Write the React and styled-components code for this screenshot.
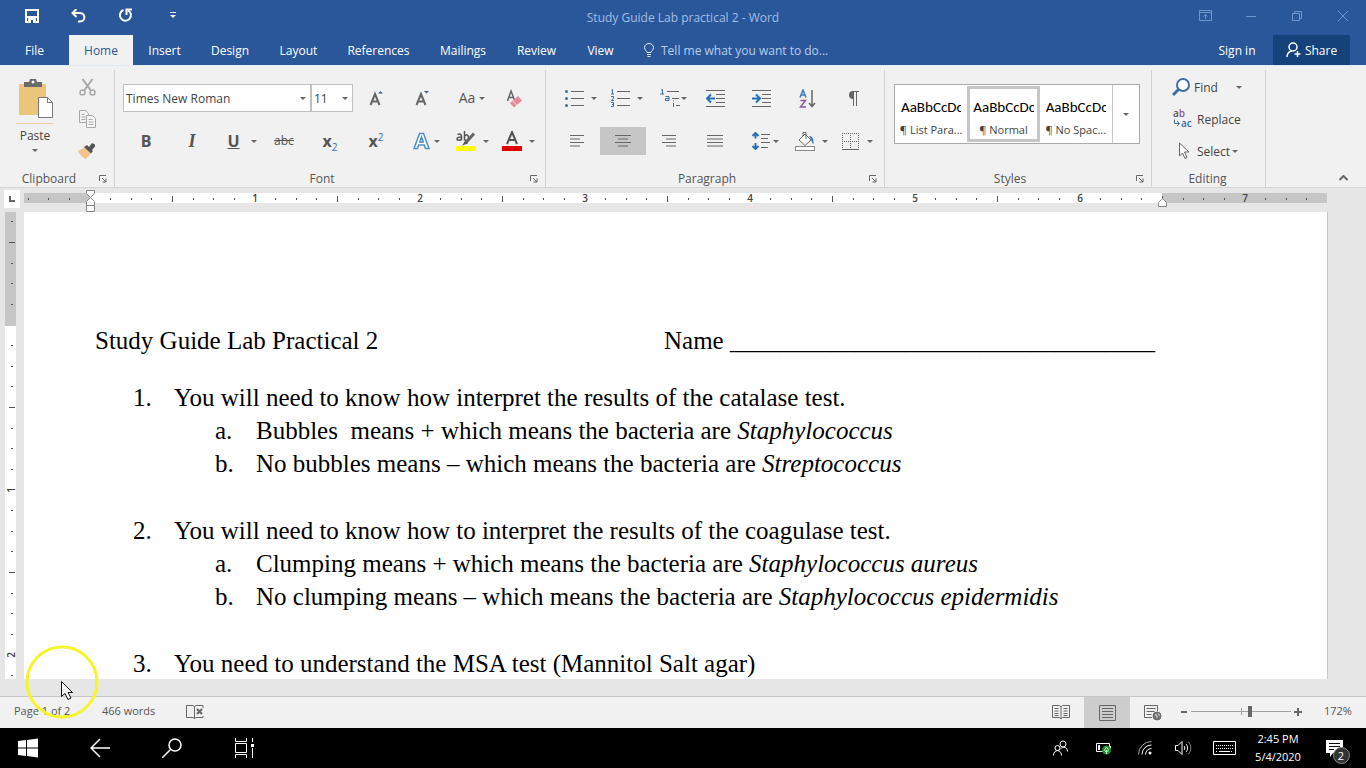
import React from 'react';
import styled, { createGlobalStyle } from 'styled-components';

const GlobalStyle = createGlobalStyle`
  * {
    box-sizing: border-box;
  }

  body {
    margin: 0;
    background: #e6e6e6;
    font-family: "Segoe UI", "Open Sans", "Noto Sans", sans-serif;
    font-size: 12px;
    color: #444;
  }

  button,
  input,
  select {
    font: inherit;
    color: inherit;
  }

  svg {
    display: block;
    flex: none;
  }
`;

const Window = styled.div`
  display: flex;
  flex-direction: column;
  height: 100vh;
  overflow: hidden;
`;

/* ---------- shared ---------- */

const PlainButton = styled.button`
  display: flex;
  align-items: center;
  justify-content: center;
  padding: 0;
  border: none;
  background: transparent;
  white-space: nowrap;
  cursor: pointer;
`;

const CaretShape = styled.span`
  flex: none;
  border: 3px solid transparent;
  border-top-color: #666;
  border-bottom: none;
`;

/* ---------- title bar and tabs ---------- */

const Header = styled.header`
  flex: none;
  background: #2a579a;
  color: #fff;
`;

const TitleBar = styled.div`
  display: grid;
  grid-template-columns: 1fr auto 1fr;
  align-items: center;
  height: 35px;
`;

const QuickAccess = styled.div`
  display: flex;
  align-items: flex-start;
  height: 34px;
  padding-left: 8px;
`;

const QuickButton = styled(PlainButton)`
  width: 47px;
  height: 30px;
`;

const WindowTitle = styled.div`
  color: #a3bde3;
`;

const WindowControls = styled.div`
  display: flex;
  align-items: flex-start;
  justify-content: flex-end;
  height: 34px;
`;

const ControlButton = styled(PlainButton)`
  width: 46px;
  height: 30px;
  color: #7095cc;
`;

const TabRow = styled.nav`
  display: flex;
  height: 30px;
`;

const Tab = styled(PlainButton)`
  width: ${(props) => props.$width}px;
  height: 30px;
  background: ${(props) => (props.$active ? '#f1f1f1' : 'transparent')};
  color: ${(props) => (props.$active ? '#2a579a' : '#fff')};
`;

const TellMe = styled.label`
  display: flex;
  flex: 1;
  align-items: center;
  gap: 6px;
  padding-left: 13px;
`;

const TellMeInput = styled.input`
  width: 200px;
  padding: 0;
  border: none;
  outline: none;
  background: transparent;

  &::placeholder {
    color: #b8cdec;
    opacity: 1;
  }
`;

const ShareButton = styled(PlainButton)`
  gap: 4px;
  width: 77px;
  height: 30px;
  margin-right: 16px;
  background: #15427a;
`;

const SignIn = styled(PlainButton)`
  width: 72px;
`;

/* ---------- ribbon ---------- */

const Ribbon = styled.section`
  display: flex;
  flex: none;
  height: 123px;
  padding-top: 4px;
  border-top: 1px solid #e2ebf6;
  border-bottom: 1px solid #d5d5d5;
  background: #f1f1f1;
`;

const Group = styled.div`
  display: flex;
  flex: none;
  flex-direction: column;
  width: ${(props) => props.$width}px;
  padding: 14px 8px 0;
  border-right: 1px solid #d2d2d2;
`;

const GroupBody = styled.div`
  display: flex;
  flex: 1;
  flex-direction: ${(props) => (props.$column ? 'column' : 'row')};
  gap: ${(props) => props.$gap || 0}px;
`;

const GroupFooter = styled.div`
  display: grid;
  grid-template-columns: ${(props) => (props.$launcher ? '1fr 14px' : '1fr')};
  align-items: center;
  height: 16px;
  margin: 0 -4px 0 -6px;
  line-height: 16px;
  text-align: center;
  color: #555;
`;

const ToolRow = styled.div`
  display: flex;
  height: 28px;
`;

const Tool = styled(PlainButton)`
  gap: ${(props) => props.$gap || 4}px;
  width: 46px;
  height: 28px;
  padding-left: ${(props) => (props.$split ? 8 : 0)}px;
  background: ${(props) => (props.$pressed ? '#c6c6c6' : 'transparent')};
`;

const Glyph = styled.span`
  font-size: ${(props) => props.$size || 16}px;
  font-weight: ${(props) => (props.$bold ? 700 : 400)};
  font-style: ${(props) => (props.$italic ? 'italic' : 'normal')};
  font-family: ${(props) => (props.$serif ? '"Liberation Serif", serif' : 'inherit')};
  text-decoration: ${(props) => props.$line || 'none'};
  line-height: 20px;
  color: #555;

  sub,
  sup {
    font-size: 10px;
    font-weight: 400;
    line-height: 0;
    color: #2a70b8;
  }
`;

const ComboWrap = styled.label`
  display: flex;
  align-items: center;
  width: ${(props) => props.$width}px;
  height: 28px;
  padding-right: 4px;
  border: 1px solid #c0c0c0;
  background: #fff;
`;

const Combo = styled.select`
  flex: 1;
  min-width: 0;
  padding: 0 0 0 2px;
  border: none;
  outline: none;
  appearance: none;
  background: transparent;
`;

const PasteButton = styled(PlainButton)`
  flex-direction: column;
  justify-content: flex-start;
  gap: 5px;
  width: 52px;
  height: 80px;
  margin: -5px 0 0;
  line-height: 16px;
`;

const PasteSplit = styled.span`
  display: flex;
  flex-direction: column;
  align-items: center;
  gap: 5px;
  width: 38px;
  padding-top: 4px;
  border-top: 1px solid #ecd0a8;
`;

const ClipboardTools = styled.div`
  display: flex;
  flex-direction: column;
  gap: 4px;
  width: 42px;
  margin-top: -11px;
`;

const ClipboardBody = styled(GroupBody)`
  padding-left: 1px;
`;

const Gallery = styled.div`
  display: flex;
  height: 60px;
  margin: 0 3px 0 1px;
  border: 1px solid #ababab;
  background: #fff;
`;

const StyleCard = styled.button`
  flex: 1;
  min-width: 0;
  margin: 1px 0;
  padding: 6px 3px 0;
  border: 3px solid ${(props) => (props.$active ? '#c6c6c6' : 'transparent')};
  background: #fff;
  cursor: pointer;
`;

const StyleSample = styled.span`
  display: block;
  overflow: hidden;
  margin-bottom: 7px;
  font-family: Calibri, Lato, sans-serif;
  font-size: 15px;
  line-height: 18px;
  text-align: left;
  white-space: nowrap;
  color: #000;
`;

const StyleName = styled.span`
  display: block;
  margin: 0 -4px;
  font-size: 11px;
  line-height: 14px;
  white-space: nowrap;
`;

const GalleryMore = styled(PlainButton)`
  width: 27px;
  border-left: 1px solid #c6c6c6;
`;

const EditList = styled.div`
  display: flex;
  flex-direction: column;
  gap: 8px;
  margin-top: -9px;
  padding-left: 12px;
`;

const EditButton = styled(PlainButton)`
  justify-content: flex-start;
  gap: ${(props) => props.$gap || 4}px;
  height: 24px;
`;

const EditIcon = styled.span`
  display: flex;
  justify-content: center;
  width: ${(props) => props.$width}px;
`;

const CollapseButton = styled(PlainButton)`
  align-self: flex-end;
  width: 24px;
  height: 18px;
  margin: 0 11px 0 auto;
`;

/* ---------- document ---------- */

const Workspace = styled.main`
  display: grid;
  flex: 1;
  grid-template-columns: 24px 1fr 38px;
  grid-template-rows: 24px 1fr;
  min-height: 0;
  padding-bottom: 17px;
  background: #e6e6e6;
`;

const TabStop = styled(PlainButton)`
  width: 16px;
  height: 18px;
  margin: 2px 0 0 4px;
  background: #fff;
`;

const RulerTrack = styled.div`
  grid-column: 2;
  min-width: 0;
  overflow: hidden;
`;

const SideRuler = styled.div`
  grid-column: 1;
  overflow: hidden;
  width: 11px;
  min-height: 0;
  margin-left: 5px;
  background: #fff;
`;

const Page = styled.article`
  min-height: 0;
  overflow: hidden;
  padding: 112px 166px 0 71px;
  border-right: 1px solid #c6c6c6;
  background: #fff;
  font-family: "Times New Roman", "Liberation Serif", serif;
  font-size: 25px;
  line-height: 33px;
  color: #000;
`;

const Heading = styled.div`
  display: grid;
  grid-template-columns: 569px 1fr;
  margin-bottom: 24px;
  white-space: nowrap;
`;

const Outline = styled.ol`
  display: grid;
  gap: 34px;
  margin: 0;
  padding: 0 0 0 38px;
  list-style: none;
  counter-reset: question;
`;

const Question = styled.li`
  padding-left: 41px;
  white-space: nowrap;
  counter-increment: question;

  &::before {
    content: counter(question) '.';
    float: left;
    margin-left: -41px;
  }
`;

const Answers = styled.ol`
  margin: 0;
  padding: 0 0 0 82px;
  list-style: none;
  counter-reset: answer;

  li {
    counter-increment: answer;
  }

  li::before {
    content: counter(answer, lower-alpha) '.';
    float: left;
    margin-left: -41px;
  }
`;

/* ---------- status bar ---------- */

const StatusBar = styled.footer`
  display: flex;
  flex: none;
  align-items: center;
  height: 32px;
  padding: 0 14px;
  border-top: 1px solid #c6c6c6;
  background: #f1f1f1;
  font-size: 11px;
  line-height: 16px;
  color: #555;
`;

const StatusText = styled.span`
  width: ${(props) => props.$width}px;
  padding-bottom: 3px;
  white-space: nowrap;
`;

const StatusIcon = styled.span`
  padding-bottom: 2px;
`;

const ViewButtons = styled.div`
  display: flex;
  align-self: stretch;
  margin-left: auto;
`;

const ViewButton = styled(PlainButton)`
  width: 46px;
  background: ${(props) => (props.$active ? '#cdcdcd' : 'transparent')};
`;

const Zoom = styled.div`
  display: flex;
  align-items: center;
  gap: 1px;
  margin: 0 20px 0 2px;
  padding-bottom: 2px;
`;

const ZoomStep = styled(PlainButton)`
  width: 12px;
  height: 16px;
`;

const ZoomSlider = styled.input`
  width: 100px;
  height: 14px;
  margin: 0;
  appearance: none;
  background:
    linear-gradient(#a0a0a0, #a0a0a0) 50% 50% / 1px 7px no-repeat,
    linear-gradient(#a0a0a0, #a0a0a0) 50% 50% / 100% 1px no-repeat;

  &::-webkit-slider-thumb {
    appearance: none;
    width: 4px;
    height: 11px;
    background: #666;
  }
`;

/* ---------- taskbar ---------- */

const Taskbar = styled.nav`
  display: flex;
  flex: none;
  align-items: center;
  height: 40px;
  padding-right: 9px;
  background: #000;
  color: #fff;
`;

const TaskButton = styled(PlainButton)`
  width: ${(props) => props.$width}px;
  height: 40px;
`;

const Tray = styled.div`
  display: flex;
  margin-left: auto;
`;

const Clock = styled.div`
  width: 66px;
  padding-top: 2px;
  font-size: 11px;
  line-height: 18px;
  text-align: center;
  white-space: nowrap;
`;

const Notice = styled.span`
  position: relative;
`;

const NoticeCount = styled.span`
  position: absolute;
  top: 7px;
  left: 7px;
  width: 17px;
  height: 17px;
  border: 1px solid #888;
  border-radius: 50%;
  background: #333;
  font-size: 11px;
  line-height: 15px;
  text-align: center;
`;

const Pointer = styled.svg`
  position: absolute;
  top: 644px;
  left: 24px;
  pointer-events: none;
`;

/* ---------- icons ---------- */

const Icon = ({ w = 18, h = 18, children, ...rest }) => (
  <svg width={w} height={h} viewBox={`0 0 ${w} ${h}`} fill="none" stroke="#666" aria-hidden="true" {...rest}>
    {children}
  </svg>
);

const Caret = () => <CaretShape />;

const LauncherIcon = () => (
  <Icon w={8} h={8}>
    <path d="M.5 6V.5H7M3 3l4 4M7 3.500V7H3.500" />
  </Icon>
);

const BulletsIcon = () => (
  <Icon w={19} h={18}>
    <path d="M6 2.500h13M6 9.500h13M6 16.500h13" />
    <g fill="#3e6da8" stroke="none">
      <circle cx="1.500" cy="2.500" r="1.500" />
      <circle cx="1.500" cy="9.500" r="1.500" />
      <circle cx="1.500" cy="16.500" r="1.500" />
    </g>
  </Icon>
);

const NumbersIcon = () => (
  <Icon w={19} h={18}>
    <path d="M6 2.500h13M6 9.500h13M6 16.500h13" />
    <path
      stroke="#3e6da8"
      d="M.5 1l1-.5V5M0 5h3M0 7.500h2.500v1.500L.5 11.500H3M0 13.500h2.500v4H0M1 15.500h1.500"
    />
  </Icon>
);

const MultilevelIcon = () => (
  <Icon w={20} h={18}>
    <path d="M7 2.500h12M12 9.500h7M16 16.500h4" />
    <path
      stroke="#3e6da8"
      d="M1 1l1.500-.5V5M0 5h4M5.500 7.500H9v4H5.500v-2H9M13.500 14v4M13.500 11.500v1"
    />
  </Icon>
);

const IndentIcon = ({ right }) => (
  <Icon w={19} h={17}>
    <path d="M0 .5h19M10 4.500h9M10 8.500h9M10 12.500h9M0 16.500h19" />
    <path
      stroke="#2a70b8"
      strokeWidth="2"
      d={right ? 'M0 8.500h7M4 4.500l4 4-4 4' : 'M9 8.500H2M5 4.500l-4 4 4 4'}
    />
  </Icon>
);

const SortIcon = () => (
  <Icon w={17} h={19}>
    <path stroke="#3e79b8" strokeWidth="1.500" d="M1 8.500L4 1l3 7.500M2 6h4" />
    <path stroke="#8c5a9e" strokeWidth="1.500" d="M1.500 11.500h5l-5 6.500h5.500" />
    <path strokeWidth="1.500" d="M13 1v16M10 14l3 3.500 3-3.500" />
  </Icon>
);

const AlignIcon = ({ type }) => {
  const paths = {
    left: 'M0 .5h14M0 4h10M0 7.500h14M0 11h10',
    center: 'M0 .5h16M3 4h10M0 7.500h16M3 11h10',
    right: 'M0 .5h14M4 4h10M0 7.500h14M4 11h10',
    justify: 'M0 .5h16M0 4h16M0 7.500h16M0 11h16',
  };
  const wide = type === 'center' || type === 'justify';
  return (
    <Icon w={wide ? 16 : 14} h={12}>
      <path d={paths[type]} />
    </Icon>
  );
};

const SpacingIcon = () => (
  <Icon w={18} h={18}>
    <path d="M9 2.500h9M9 6.500h7M9 10.500h9M9 15.500h7" />
    <path stroke="#2a70b8" strokeWidth="2" d="M3.500 1.500v5M3.500 11v5M.5 4l3-3 3 3M.5 14l3 3 3-3" />
  </Icon>
);

const ShadingIcon = () => (
  <Icon w={20} h={20}>
    <rect x=".5" y="15.500" width="19" height="4" fill="#fff" stroke="#888" />
    <path fill="#fff" d="M4 9l6-6 6 6-6 5.500z" />
    <path d="M8 5V1.500h3V8" />
    <path fill="#3e79b8" stroke="none" d="M14 5c3 0 5 2 4.500 8-2-1-1.500-4-4.500-8z" />
  </Icon>
);

const BordersIcon = () => (
  <Icon w={17} h={17}>
    <path strokeDasharray="1 1" d="M.5 0v17M16.500 0v17M8.500 0v17M0 .5h17M0 8.500h17" />
    <path d="M0 16.500h17" />
  </Icon>
);

const PasteIcon = () => (
  <Icon w={36} h={39}>
    <path fill="#e9c67c" stroke="none" d="M2 5h27v31H2z" />
    <path fill="#6a6a6a" stroke="none" d="M7 8V3h5l1-3h6l1 3h5v5z" />
    <circle cx="16" cy="3" r="1.500" fill="#fff" stroke="none" />
    <path fill="#fff" stroke="#777" d="M21.500 18.500h9l5 5v15h-14z" />
    <path stroke="#777" d="M30.500 18.500v5h5" />
  </Icon>
);

const CutIcon = () => (
  <Icon w={17} h={18} stroke="#a8a8a8">
    <path strokeWidth="2" d="M3.500 1l8 11M13.500 1l-8 11" />
    <circle cx="3.500" cy="14.500" r="2.500" strokeWidth="1.500" />
    <circle cx="13.500" cy="14.500" r="2.500" strokeWidth="1.500" />
  </Icon>
);

const CopyIcon = () => (
  <Icon w={17} h={18} stroke="#a8a8a8">
    <path d="M7 12.500H.5V.5h6l3 3V5M2.500 4.500h3M2.500 7h4M2.500 9.500h4" />
    <path fill="#f6f6f6" d="M7.500 5.500h6l3 3v9h-9zM9.500 9.500h4M9.500 12h5M9.500 14.500h5" />
  </Icon>
);

const PainterIcon = () => (
  <Icon w={18} h={16} stroke="none">
    <path fill="#f0c48c" d="M0 8l7-4 6 6-5 6c-3-1-6-4-8-8z" />
    <path fill="#555" d="M6 4l3-2 6 6-2 2.500zM11 4l3-4 3 1.500v2L14 7z" />
  </Icon>
);

const ResizeAIcon = ({ down }) => (
  <Icon w={14} h={16}>
    <path strokeWidth="2" d="M1.500 15L6 4l4.500 11M3 11.500h6" />
    <path fill="#4a5f80" stroke="none" d={down ? 'M9 1h5l-2.500 2.500z' : 'M9 3.500h5L11.500 1z'} />
  </Icon>
);

const ClearIcon = () => (
  <Icon w={17} h={19}>
    <path strokeWidth="1.500" d="M1.500 12L5 2l3.500 9M2.500 8.500h5" />
    <path fill="#e58a9a" stroke="none" d="M4 14l8-7 4 4.500-8 7z" />
    <path stroke="#f6dce0" d="M6.500 11.500l4 4.500" />
  </Icon>
);

const EffectsIcon = () => (
  <Icon w={17} h={18}>
    <path
      fill="#fff"
      stroke="#4b8fce"
      strokeWidth="1.500"
      d="M1 16.500L6.500 1.500h4L16 16.500h-3.500L11.300 13H5.700l-1.200 3.500zM6.700 10h3.600L8.500 5z"
    />
  </Icon>
);

const HighlightIcon = () => (
  <Icon w={20} h={20}>
    <path
      strokeWidth="1.500"
      stroke="#555"
      d="M1.500 3.500c3-1 4 0 4 2v4M5.500 6c-3 0-4.500.5-4.500 2s3 2 4.500 0M8.500 0v9.500M8.500 5c2-2 4-1 4 1.500s-2 4-4 2"
    />
    <path stroke="#666" strokeWidth="3" d="M18 2.500l-8 9" />
    <path fill="#555" stroke="none" d="M9 10l3 2.500L6 14.500z" />
    <path fill="#ff0" stroke="none" d="M0 15h20v5H0z" />
  </Icon>
);

const FontColorIcon = () => (
  <Icon w={20} h={20}>
    <path stroke="#555" strokeWidth="2" d="M5 13l5-12 5 12M6.500 9h7" />
    <path fill="#e00000" stroke="none" d="M0 15h20v5H0z" />
  </Icon>
);

const PilcrowIcon = () => (
  <Icon w={12} h={15}>
    <path fill="#666" stroke="none" d="M6 0v8a4 4 0 0 1 0-8z" />
    <path d="M5 .5h7M6.500 0v15M9.500 0v15" />
  </Icon>
);

const FindIcon = () => (
  <Icon w={18} h={18} stroke="#3e6da8">
    <circle cx="11" cy="7" r="6" fill="#fff" strokeWidth="2" />
    <path strokeWidth="3" d="M6.500 11.500L1 17" />
  </Icon>
);

const ReplaceIcon = () => (
  <Icon w={22} h={24} stroke="none" fontSize="10" fontWeight="600">
    <text x="1" y="10" fill="#555">
      a<tspan fill="#8c5a9e">b</tspan>
    </text>
    <text x="9" y="20" fill="#3e6da8">ac</text>
    <path stroke="#3e6da8" d="M2.500 12.500v4H7M5 14l2.500 2.500L5 19" />
  </Icon>
);

const ArrowIcon = () => (
  <Icon w={12} h={18}>
    <path fill="#fff" d="M1.500 1v13l3-3 2.500 5.500 2-1L6.500 10H11z" />
  </Icon>
);

/* ---------- parts ---------- */

const tabs = [
  { name: 'File', width: 69 },
  { name: 'Home', width: 64 },
  { name: 'Insert', width: 63 },
  { name: 'Design', width: 68 },
  { name: 'Layout', width: 69 },
  { name: 'References', width: 91 },
  { name: 'Mailings', width: 78 },
  { name: 'Review', width: 69 },
  { name: 'View', width: 59 },
];

const TopBar = () => (
  <Header>
    <TitleBar>
      <QuickAccess>
        <QuickButton aria-label="Save">
          <Icon w={14} h={14} stroke="#fff">
            <path strokeWidth="2" d="M1 1h12v12H1zM1 8h12" />
            <path fill="#fff" d="M3.500 9.500h7v4h-7z" />
            <path fill="#2a579a" stroke="none" d="M6 11h2v3H6z" />
          </Icon>
        </QuickButton>
        <QuickButton aria-label="Undo">
          <Icon w={15} h={14} stroke="#fff" strokeWidth="2">
            <path d="M5.500 0L1.500 4l4 4M2 4h6c7 0 7 8 1 8.500H7" />
          </Icon>
        </QuickButton>
        <QuickButton aria-label="Repeat">
          <Icon w={15} h={15} stroke="#fff" strokeWidth="2">
            <path d="M5.500 2A5.500 5.500 0 1 0 10 2.300M8.500 7V1.500H14" />
          </Icon>
        </QuickButton>
        <QuickButton aria-label="Customize Quick Access Toolbar">
          <Icon w={6} h={7} stroke="#fff">
            <path d="M0 .5h6" />
            <path fill="#fff" stroke="none" d="M0 3h6L3 6z" />
          </Icon>
        </QuickButton>
      </QuickAccess>
      <WindowTitle>Study Guide Lab practical 2 - Word</WindowTitle>
      <WindowControls>
        <ControlButton aria-label="Ribbon display options">
          <Icon w={13} h={11} stroke="currentColor">
            <path d="M.5.500h12v10H.5zM.5 2.500h12M6.500 9V4.500M4.500 6.500l2-2 2 2" />
          </Icon>
        </ControlButton>
        <ControlButton aria-label="Minimize">
          <Icon w={10} h={10} stroke="currentColor">
            <path d="M0 5.500h10" />
          </Icon>
        </ControlButton>
        <ControlButton aria-label="Restore">
          <Icon w={10} h={10} stroke="currentColor">
            <path d="M.5 2.500h7v7h-7zM2.500 2V.5h7v7H8" />
          </Icon>
        </ControlButton>
        <ControlButton aria-label="Close">
          <Icon w={10} h={10} stroke="currentColor">
            <path d="M0 0l10 10M10 0L0 10" />
          </Icon>
        </ControlButton>
      </WindowControls>
    </TitleBar>
    <TabRow>
      {tabs.map((tab) => (
        <Tab key={tab.name} $width={tab.width} $active={tab.name === 'Home'}>
          {tab.name}
        </Tab>
      ))}
      <TellMe>
        <Icon w={12} h={14} stroke="#e6eefa">
          <path d="M4 9.500C4 8 1.500 7 1.500 4.500a4.500 4 0 0 1 9 0C10.500 7 8 8 8 9.500zM4 11.500h4M4.500 13.500h3" />
        </Icon>
        <TellMeInput placeholder="Tell me what you want to do..." aria-label="Tell me what you want to do" />
      </TellMe>
      <SignIn>Sign in</SignIn>
      <ShareButton>
        <Icon w={15} h={16} stroke="#fff" strokeWidth="1.500">
          <circle cx="7" cy="5" r="4" />
          <path d="M1 15c0-4 2-5.500 5-6M11.500 9v6M8.500 12h6" />
        </Icon>
        Share
      </ShareButton>
    </TabRow>
  </Header>
);

const Footer = ({ label, launcher = true }) => (
  <GroupFooter $launcher={launcher}>
    <span>{label}</span>
    {launcher && (
      <PlainButton aria-label={`${label} settings`}>
        <LauncherIcon />
      </PlainButton>
    )}
  </GroupFooter>
);

const ClipboardGroup = () => (
  <Group $width={115}>
    <ClipboardBody $gap={3}>
      <PasteButton>
        <PasteIcon />
        <PasteSplit>
          Paste
          <Caret />
        </PasteSplit>
      </PasteButton>
      <ClipboardTools>
        <Tool aria-label="Cut"><CutIcon /></Tool>
        <Tool aria-label="Copy"><CopyIcon /></Tool>
        <Tool aria-label="Format Painter"><PainterIcon /></Tool>
      </ClipboardTools>
    </ClipboardBody>
    <Footer label="Clipboard" />
  </Group>
);

const FontGroup = () => (
  <Group $width={431}>
    <GroupBody $column $gap={15}>
      <ToolRow>
        <ComboWrap $width={188}>
          <Combo aria-label="Font" defaultValue="Times New Roman">
            <option>Times New Roman</option>
            <option>Calibri</option>
          </Combo>
          <Caret />
        </ComboWrap>
        <ComboWrap $width={42}>
          <Combo aria-label="Font size" defaultValue="11">
            <option>11</option>
            <option>12</option>
          </Combo>
          <Caret />
        </ComboWrap>
        <Tool aria-label="Increase font size"><ResizeAIcon /></Tool>
        <Tool aria-label="Decrease font size"><ResizeAIcon down /></Tool>
        <Tool $split aria-label="Change case">
          <Glyph $size={14}>Aa</Glyph>
          <Caret />
        </Tool>
        <Tool aria-label="Clear formatting"><ClearIcon /></Tool>
      </ToolRow>
      <ToolRow>
        <Tool aria-label="Bold"><Glyph $bold>B</Glyph></Tool>
        <Tool aria-label="Italic"><Glyph $bold $italic $serif $size={18}>I</Glyph></Tool>
        <Tool $split $gap={11} aria-label="Underline">
          <Glyph $bold $line="underline">U</Glyph>
          <Caret />
        </Tool>
        <Tool aria-label="Strikethrough"><Glyph $size={12} $line="line-through">abc</Glyph></Tool>
        <Tool aria-label="Subscript"><Glyph $bold>x<sub>2</sub></Glyph></Tool>
        <Tool aria-label="Superscript"><Glyph $bold>x<sup>2</sup></Glyph></Tool>
        <Tool $split aria-label="Text effects">
          <EffectsIcon />
          <Caret />
        </Tool>
        <Tool $split $gap={7} aria-label="Highlight color">
          <HighlightIcon />
          <Caret />
        </Tool>
        <Tool $split $gap={7} aria-label="Font color">
          <FontColorIcon />
          <Caret />
        </Tool>
      </ToolRow>
    </GroupBody>
    <Footer label="Font" />
  </Group>
);

const ParagraphGroup = () => (
  <Group $width={339}>
    <GroupBody $column $gap={15}>
      <ToolRow>
        <Tool $split $gap={7} aria-label="Bullets"><BulletsIcon /><Caret /></Tool>
        <Tool $split $gap={7} aria-label="Numbering"><NumbersIcon /><Caret /></Tool>
        <Tool $split $gap={1} aria-label="Multilevel list"><MultilevelIcon /><Caret /></Tool>
        <Tool aria-label="Decrease indent"><IndentIcon /></Tool>
        <Tool aria-label="Increase indent"><IndentIcon right /></Tool>
        <Tool aria-label="Sort"><SortIcon /></Tool>
        <Tool aria-label="Show paragraph marks"><PilcrowIcon /></Tool>
      </ToolRow>
      <ToolRow>
        <Tool aria-label="Align left"><AlignIcon type="left" /></Tool>
        <Tool $pressed aria-label="Center"><AlignIcon type="center" /></Tool>
        <Tool aria-label="Align right"><AlignIcon type="right" /></Tool>
        <Tool aria-label="Justify"><AlignIcon type="justify" /></Tool>
        <Tool $split $gap={3} aria-label="Line spacing"><SpacingIcon /><Caret /></Tool>
        <Tool $split $gap={7} aria-label="Shading"><ShadingIcon /><Caret /></Tool>
        <Tool $split $gap={8} aria-label="Borders"><BordersIcon /><Caret /></Tool>
      </ToolRow>
    </GroupBody>
    <Footer label="Paragraph" />
  </Group>
);

const StylesGroup = () => (
  <Group $width={267}>
    <GroupBody $column>
      <Gallery>
        {['List Para...', 'Normal', 'No Spac...'].map((name) => (
          <StyleCard key={name} $active={name === 'Normal'}>
            <StyleSample>AaBbCcDc</StyleSample>
            <StyleName>¶ {name}</StyleName>
          </StyleCard>
        ))}
        <GalleryMore aria-label="More styles">
          <Caret />
        </GalleryMore>
      </Gallery>
    </GroupBody>
    <Footer label="Styles" />
  </Group>
);

const EditingGroup = () => (
  <Group $width={114}>
    <GroupBody $column>
      <EditList>
        <EditButton>
          <EditIcon $width={18}><FindIcon /></EditIcon>
          Find
          <EditIcon $width={40}><Caret /></EditIcon>
        </EditButton>
        <EditButton>
          <EditIcon $width={21}><ReplaceIcon /></EditIcon>
          Replace
        </EditButton>
        <EditButton $gap={2}>
          <EditIcon $width={23}><ArrowIcon /></EditIcon>
          Select
          <Caret />
        </EditButton>
      </EditList>
    </GroupBody>
    <Footer label="Editing" launcher={false} />
  </Group>
);

// One inch on the page at the current zoom, in pixels
const INCH = 165;

const tickList = (origin, length) => {
  const ticks = [];
  for (let i = -Math.floor((origin * 8) / INCH); origin + (i * INCH) / 8 < length; i += 1) {
    ticks.push({ at: Math.floor(origin + (i * INCH) / 8), step: i });
  }
  return ticks.filter((tick) => tick.step !== 0);
};

const TopRuler = () => (
  <svg width="1303" height="24" fontSize="10" fontWeight="600" textAnchor="middle" aria-hidden="true">
    <rect y="5" width="1303" height="10" fill="#c6c6c6" />
    <rect x="66" y="5" width="1072" height="10" fill="#fff" />
    {tickList(66, 1303).map(({ at, step }) =>
      step % 8 === 0 ? (
        <text key={step} x={at} y="14" fill="#444">{step / 8}</text>
      ) : (
        <rect key={step} x={at} y={step % 4 === 0 ? 8 : 10} width="1" height={step % 4 === 0 ? 6 : 2} fill="#555" />
      )
    )}
    <g fill="#fff" stroke="#888">
      <path d="M62.500 2.500h8v3l-4 4-4-4zM62.500 17.500v-4l4-4 4 4v4zM62.500 17.500h8v6h-8z" />
      <path d="M1134.500 18.500v-4l4-4 4 4v4z" />
    </g>
  </svg>
);

const LeftRuler = () => (
  <svg width="11" height="467" fontSize="10" fontWeight="600" textAnchor="middle" aria-hidden="true">
    <rect width="11" height="114" fill="#c6c6c6" />
    {tickList(113, 467).map(({ at, step }) =>
      step % 8 === 0 ? (
        <text key={step} transform={`translate(10 ${at}) rotate(-90)`} fill="#444">{step / 8}</text>
      ) : (
        <rect key={step} x={step % 4 === 0 ? 4 : 6} y={at} width={step % 4 === 0 ? 6 : 2} height="1" fill="#555" />
      )
    )}
  </svg>
);

const Document = () => (
  <Workspace>
    <TabStop aria-label="Tab stop">
      <Icon w={6} h={6}>
        <path strokeWidth="2" d="M1 0v5h5" />
      </Icon>
    </TabStop>
    <RulerTrack>
      <TopRuler />
    </RulerTrack>
    <SideRuler>
      <LeftRuler />
    </SideRuler>
    <Page>
      <Heading>
        <span>Study Guide Lab Practical 2</span>
        <span>Name {'_'.repeat(34)}</span>
      </Heading>
      <Outline>
        <Question>
          You will need to know how interpret the results of the catalase test.
          <Answers>
            <li>Bubbles&nbsp; means + which means the bacteria are <em>Staphylococcus</em></li>
            <li>No bubbles means – which means the bacteria are <em>Streptococcus</em></li>
          </Answers>
        </Question>
        <Question>
          You will need to know how to interpret the results of the coagulase test.
          <Answers>
            <li>Clumping means + which means the bacteria are <em>Staphylococcus aureus</em></li>
            <li>No clumping means – which means the bacteria are <em>Staphylococcus epidermidis</em></li>
          </Answers>
        </Question>
        <Question>You need to understand the MSA test (Mannitol Salt agar)</Question>
      </Outline>
    </Page>
  </Workspace>
);

const Status = () => (
  <StatusBar>
    <StatusText $width={88}>Page 1 of 2</StatusText>
    <StatusText $width={84}>466 words</StatusText>
    <StatusIcon>
      <Icon w={18} h={16}>
        <path d="M8.500 2.500L7 1.500H.5v12H7l1.500 1 1.500-1h7V12M8.500 2.500v12M8.500 2.500l1.500-1h7V4" />
        <path strokeWidth="2" d="M11 5l5 5M16 5l-5 5" />
      </Icon>
    </StatusIcon>
    <ViewButtons>
      <ViewButton aria-label="Read mode">
        <Icon w={18} h={15}>
          <path d="M9 2L7.500.500H.5v12h7L9 14l1.500-1.500h7V.5h-7zM9 2v12M2.500 3.500h4M2.500 6h4M2.500 8.500h4M2.500 10.500h4M11.500 3.500h4M11.500 6h4M11.500 8.500h4M11.500 10.500h4" />
        </Icon>
      </ViewButton>
      <ViewButton $active aria-label="Print layout">
        <Icon w={17} h={16}>
          <path d="M.5.500h16v15H.5zM3 3.500h11M3 6.500h11M3 9.500h11M3 12.500h11" />
        </Icon>
      </ViewButton>
      <ViewButton aria-label="Web layout">
        <Icon w={18} h={16}>
          <path d="M8 12.500H.5V.5h13V6M2.500 3.500h9M2.500 6.500h8M2.500 9.500h5" />
          <circle cx="13" cy="11" r="4" fill="#777" />
          <path stroke="#eee" d="M11 9.500l2 1v2M14.500 8.500l1 2" />
        </Icon>
      </ViewButton>
    </ViewButtons>
    <Zoom>
      <ZoomStep aria-label="Zoom out">
        <Icon w={6} h={8}><path strokeWidth="2" d="M0 4h6" /></Icon>
      </ZoomStep>
      <ZoomSlider type="range" min="0" max="100" defaultValue="59" aria-label="Zoom" />
      <ZoomStep aria-label="Zoom in">
        <Icon w={8} h={8}><path strokeWidth="2" d="M0 4h8M4 0v8" /></Icon>
      </ZoomStep>
    </Zoom>
    <StatusText $width={28}>172%</StatusText>
  </StatusBar>
);

const SystemBar = () => (
  <Taskbar>
    <TaskButton $width={56} aria-label="Start">
      <Icon w={20} h={20} stroke="none" fill="#fff">
        <path d="M0 3l8-1v7.500H0zM9 2l11-1.500v9H9zM0 10.500h8V18l-8-1zM9 10.500h11v9L9 18z" />
      </Icon>
    </TaskButton>
    <TaskButton $width={88} aria-label="Back">
      <Icon w={20} h={20} stroke="#fff" strokeWidth="1.500">
        <path d="M20 10H1M10 1l-9 9 9 9" />
      </Icon>
    </TaskButton>
    <TaskButton $width={56} aria-label="Search">
      <Icon w={20} h={20} stroke="#fff" strokeWidth="1.500">
        <circle cx="13" cy="7" r="6" />
        <path d="M8.500 11.500L0 20" />
      </Icon>
    </TaskButton>
    <TaskButton $width={88} aria-label="Task view">
      <Icon w={21} h={20} stroke="#fff">
        <path d="M1.500 0v3.500h11V0M1.500 5.500h11v9h-11zM1.500 20v-3.500h11V20M18.500 0v4M18.500 10v10" />
        <path fill="#fff" stroke="none" d="M17 6h3v3h-3z" />
      </Icon>
    </TaskButton>
    <Tray>
      <TaskButton $width={42} aria-label="People">
        <Icon w={15} h={16} stroke="#fff">
          <circle cx="10" cy="4" r="3" />
          <circle cx="4.500" cy="8" r="2.500" />
          <path d="M.5 15.500c0-6.500 8-6.500 8 0M7.500 9c2.500-3 7-2 7 2.500" />
        </Icon>
      </TaskButton>
      <TaskButton $width={46} aria-label="Battery">
        <Icon w={16} h={14} stroke="#fff">
          <path d="M.5 2.500h13v8H.5zM14.500 5v3" />
          <path fill="#fff" stroke="none" d="M2 4h2v5H2z" />
          <circle cx="10.500" cy="9" r="4.500" fill="#1f8f2b" stroke="none" />
          <path stroke="#bff5c0" d="M10.500 6L8.500 9l2 2.500 2-2.500zM10.500 9v4" />
        </Icon>
      </TaskButton>
      <TaskButton $width={36} aria-label="Network">
        <Icon w={14} h={14} stroke="#fff">
          <path stroke="#aaa" d="M.5 13.500a13 13 0 0 1 13-13" />
          <path d="M4 13.500A9.500 9.500 0 0 1 13.500 4M7.500 13.500a6 6 0 0 1 6-6" />
          <circle cx="12" cy="12" r="1.500" fill="#fff" stroke="none" />
        </Icon>
      </TaskButton>
      <TaskButton $width={41} aria-label="Volume">
        <Icon w={17} h={14} stroke="#fff">
          <path d="M.5 4.500H3l4-4v13l-4-4H.5zM9 5c1 1 1 3 0 4M11 3c2 2 2 6 0 8" />
          <path stroke="#888" d="M13.500 1c3 3 3 9 0 12" />
        </Icon>
      </TaskButton>
      <TaskButton $width={41} aria-label="Touch keyboard">
        <Icon w={23} h={14} stroke="#fff">
          <path d="M.5.500h22v13H.5z" />
          <path strokeDasharray="1 1" d="M3 4.500h17M3 7.500h17" />
          <path strokeDasharray="1 1" d="M3 10.500h2M18 10.500h2" />
          <path d="M6 10.500h11" />
        </Icon>
      </TaskButton>
      <Clock>
        <div>2:45 PM</div>
        <div>5/4/2020</div>
      </Clock>
      <TaskButton $width={46} aria-label="Notifications">
        <Notice>
          <Icon w={17} h={17} stroke="none">
            <path fill="#fff" d="M0 0h17v13H7l-3 4v-4H0z" />
            <path stroke="#000" d="M3 3.500h11M3 6.500h11M3 9.500h5" />
          </Icon>
          <NoticeCount>2</NoticeCount>
        </Notice>
      </TaskButton>
    </Tray>
  </Taskbar>
);

const App = () => {
  return (
    <Window>
      <GlobalStyle />
      <TopBar />
      <Ribbon>
        <ClipboardGroup />
        <FontGroup />
        <ParagraphGroup />
        <StylesGroup />
        <EditingGroup />
        <CollapseButton aria-label="Collapse the ribbon">
          <Icon w={9} h={6}>
            <path strokeWidth="2" d="M.5 5l4-4 4 4" />
          </Icon>
        </CollapseButton>
      </Ribbon>
      <Document />
      <Status />
      <SystemBar />
      <Pointer width="76" height="76" viewBox="0 0 76 76" fill="none" aria-hidden="true">
        <circle cx="38" cy="38" r="35" stroke="#f5f52c" strokeWidth="3" />
        <path fill="#fff" stroke="#111" d="M37.500 37.500v15l3.500-3 3 6 3-1.500-3-5.500h4.500z" />
      </Pointer>
    </Window>
  );
};

export default App;
